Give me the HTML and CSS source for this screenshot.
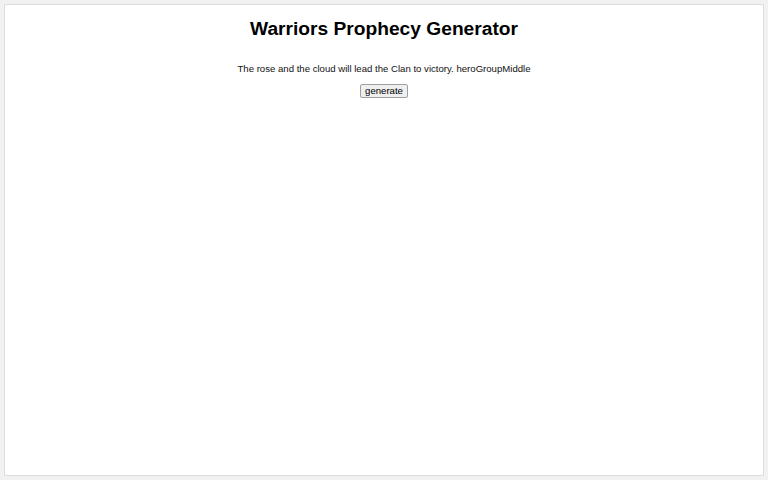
FILE: index.html
```html
<!DOCTYPE html>
<html lang="en">
<head>
<meta charset="utf-8">
<title>Warriors Prophecy Generator</title>
<link rel="stylesheet" href="styles.css">
</head>
<body>
<main class="card">
  <h1 class="title">Warriors Prophecy Generator</h1>
  <p class="prophecy">The rose and the cloud will lead the Clan to victory. heroGroupMiddle</p>
  <button class="generate" type="button">generate</button>
</main>
</body>
</html>
```

FILE: styles.css
```css
html, body {
  margin: 0;
  height: 100%;
}

body {
  background: #f1f1f1;
  padding: 4px;
  box-sizing: border-box;
  font-family: "Liberation Sans", Arial, sans-serif;
}

.card {
  box-sizing: border-box;
  height: 472px;
  background: #ffffff;
  border: 1px solid #dcdcdc;
  display: flex;
  flex-direction: column;
  align-items: center;
  padding-top: 12px;
}

.title {
  margin: 0;
  font-size: 19.2px;
  font-weight: bold;
  line-height: 23px;
  color: #000;
}

.prophecy {
  margin: 23px 0 0;
  font-size: 9.6px;
  line-height: 11px;
  color: #111;
}

.generate {
  margin-top: 10px;
  font-family: "Liberation Sans", Arial, sans-serif;
  font-size: 9.6px;
  line-height: 12px;
  padding: 0 4px;
  background: #efefef;
  border: 1px solid #a0a0a0;
  border-radius: 2px;
  color: #000;
}
```
